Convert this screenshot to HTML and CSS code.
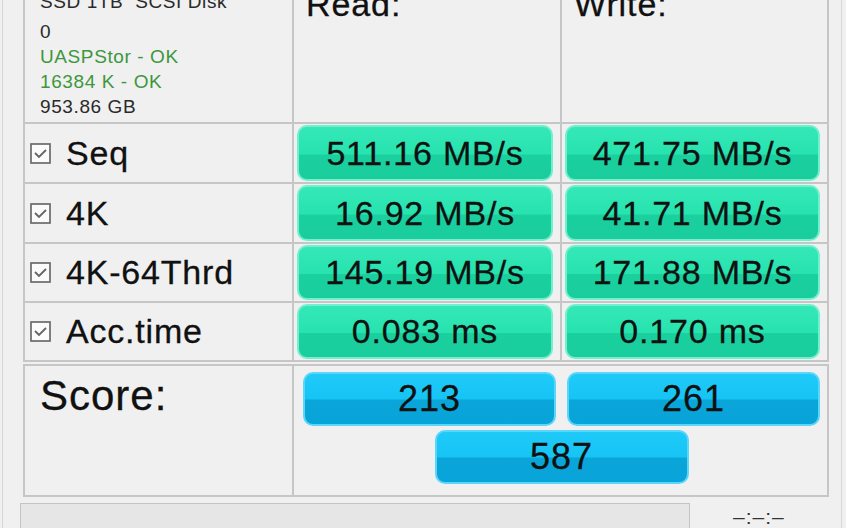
FILE: index.html
```html
<!DOCTYPE html>
<html>
<head>
<meta charset="utf-8">
<link rel="stylesheet" href="styles.css">
</head>
<body>
<div class="window">
  <div class="bench">
    <div class="cell info">
      <div class="info-lines">
        <div class="line first">SSD 1TB&nbsp;&nbsp;SCSI Disk</div>
        <div class="line">0</div>
        <div class="line ok">UASPStor - OK</div>
        <div class="line ok">16384 K - OK</div>
        <div class="line">953.86 GB</div>
      </div>
    </div>
    <div class="cell head"><span class="head-text">Read:</span></div>
    <div class="cell head"><span class="head-text">Write:</span></div>

    <div class="cell label"><svg class="check" width="21" height="21" viewBox="0 0 21 21"><rect x="1" y="1" width="19" height="19" fill="#fbfbfb" stroke="#6a6a6a" stroke-width="1.7"/><polyline points="5,10 9,14 16,7" fill="none" stroke="#666" stroke-width="1.9"/></svg><span>Seq</span></div>
    <div class="cell val"><div class="speed">511.16 MB/s</div></div>
    <div class="cell val"><div class="speed">471.75 MB/s</div></div>

    <div class="cell label"><svg class="check" width="21" height="21" viewBox="0 0 21 21"><rect x="1" y="1" width="19" height="19" fill="#fbfbfb" stroke="#6a6a6a" stroke-width="1.7"/><polyline points="5,10 9,14 16,7" fill="none" stroke="#666" stroke-width="1.9"/></svg><span>4K</span></div>
    <div class="cell val"><div class="speed">16.92 MB/s</div></div>
    <div class="cell val"><div class="speed">41.71 MB/s</div></div>

    <div class="cell label"><svg class="check" width="21" height="21" viewBox="0 0 21 21"><rect x="1" y="1" width="19" height="19" fill="#fbfbfb" stroke="#6a6a6a" stroke-width="1.7"/><polyline points="5,10 9,14 16,7" fill="none" stroke="#666" stroke-width="1.9"/></svg><span>4K-64Thrd</span></div>
    <div class="cell val"><div class="speed">145.19 MB/s</div></div>
    <div class="cell val"><div class="speed">171.88 MB/s</div></div>

    <div class="cell label"><svg class="check" width="21" height="21" viewBox="0 0 21 21"><rect x="1" y="1" width="19" height="19" fill="#fbfbfb" stroke="#6a6a6a" stroke-width="1.7"/><polyline points="5,10 9,14 16,7" fill="none" stroke="#666" stroke-width="1.9"/></svg><span>Acc.time</span></div>
    <div class="cell val"><div class="speed">0.083 ms</div></div>
    <div class="cell val"><div class="speed">0.170 ms</div></div>
  </div>

  <div class="score">
    <div class="cell score-label">Score:</div>
    <div class="cell score-vals">
      <div class="sbox">213</div>
      <div class="sbox">261</div>
      <div class="sbox total">587</div>
    </div>
  </div>

  <div class="status">
    <div class="progress"></div>
    <div class="time">–:–:–</div>
  </div>
</div>
</body>
</html>
```
FILE: styles.css
```css
html, body {
  margin: 0;
  padding: 0;
  background: #f0f0f0;
  overflow: hidden;
  font-family: "Liberation Sans", Arial, sans-serif;
  color: #111;
}

.window {
  margin-left: 2px;
  width: 840px;
  height: 528px;
  border-left: 1px solid #d6d6d6;
  border-right: 1px solid #d6d6d6;
  padding-left: 20px;
  box-sizing: border-box;
  overflow: hidden;
}

.bench {
  display: grid;
  grid-template-columns: 267px 266px 265px;
  grid-template-rows: 122px 58px 58px 57px 57px;
  gap: 2px;
  padding: 0 2px 2px 2px;
  background: #c6c6c6;
  width: 806px;
  box-sizing: border-box;
}

.cell {
  background: #f0f0f0;
  overflow: hidden;
  min-width: 0;
}

.info {
  padding-left: 15px;
}

.info-lines {
  margin-top: -11px;
  font-size: 19px;
  line-height: 25px;
  letter-spacing: 0.6px;
  color: #2a2a2a;
  white-space: nowrap;
}

.info-lines .first {
  margin-bottom: 5px;
}

.info-lines .ok {
  color: #3d973d;
}

.head {
  padding-left: 12px;
}

.head-text {
  display: block;
  margin-top: -13px;
  font-size: 34px;
  line-height: 34px;
  letter-spacing: 0.9px;
  color: #111;
  -webkit-text-stroke: 0.3px #111;
}

.label {
  display: flex;
  align-items: center;
  padding-left: 5px;
  font-size: 34px;
  letter-spacing: 0.8px;
  color: #111;
  -webkit-text-stroke: 0.3px #111;
}

.check {
  flex: none;
  margin-right: 15px;
}

.val {
  padding: 1px 7px 1px 3px;
}

.speed {
  height: 100%;
  box-sizing: border-box;
  border-radius: 10px;
  border: 2px solid #72efcd;
  background: linear-gradient(to bottom, #34e8b8 0%, #27e3ae 52%, #1bd09f 54%, #19cd9c 100%);
  display: flex;
  align-items: center;
  justify-content: center;
  font-size: 34px;
  letter-spacing: 0.8px;
  color: #111;
  -webkit-text-stroke: 0.3px #111;
  white-space: nowrap;
}

.score {
  margin-top: 2px;
  display: grid;
  grid-template-columns: 267px 533px;
  grid-template-rows: 129px;
  gap: 2px;
  padding: 2px;
  background: #c6c6c6;
  width: 806px;
  box-sizing: border-box;
}

.score-label {
  padding: 9px 0 0 15px;
  font-size: 42px;
  line-height: 42px;
  letter-spacing: 1px;
  color: #111;
  -webkit-text-stroke: 0.3px #111;
}

.score-vals {
  display: grid;
  grid-template-columns: 253px 253px;
  grid-template-rows: 54px 54px;
  column-gap: 11px;
  row-gap: 4px;
  padding: 6px 0 0 9px;
}

.sbox {
  box-sizing: border-box;
  border-radius: 10px;
  border: 2px solid #5ad6fa;
  background: linear-gradient(to bottom, #1fcaf8 0%, #16c4f5 50%, #0aa6da 52%, #08a3d8 100%);
  display: flex;
  align-items: center;
  justify-content: center;
  font-size: 36px;
  letter-spacing: 1px;
  color: #111;
  -webkit-text-stroke: 0.3px #111;
}

.sbox.total {
  grid-column: 1 / span 2;
  justify-self: center;
  width: 254px;
}

.status {
  margin-top: 6px;
  margin-left: -3px;
  display: flex;
  align-items: flex-start;
}

.progress {
  width: 670px;
  height: 30px;
  box-sizing: border-box;
  border: 1px solid #c4c4c4;
  background: #e6e6e6;
}

.time {
  margin-left: 43px;
  padding-top: 3px;
  font-size: 21px;
  line-height: 21px;
  letter-spacing: 1px;
  color: #333;
}
```
